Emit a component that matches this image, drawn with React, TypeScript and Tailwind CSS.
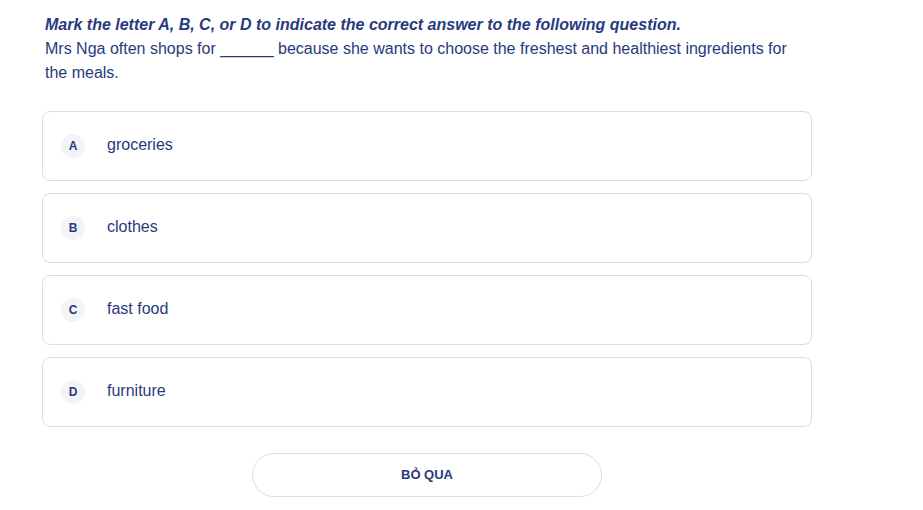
const options = [
  { key: "A", label: "groceries" },
  { key: "B", label: "clothes" },
  { key: "C", label: "fast food" },
  { key: "D", label: "furniture" },
];

export default function App() {
  return (
    <main className="min-h-screen bg-white font-['Liberation_Sans',Arial,sans-serif] text-[#283a7d]">
      <div className="w-[770px] ml-[42px] pt-[13px]">
        {/* câu hỏi */}
        <div className="pl-[3px] text-[16px] leading-[24px]">
          <p className="font-bold italic">
            Mark the letter A, B, C, or D to indicate the correct answer to the following question.
          </p>
          <p>
            Mrs Nga often shops for ______ because she wants to choose the freshest and healthiest
            ingredients for the meals.
          </p>
        </div>

        {/* đáp án */}
        <div className="mt-[26px] flex flex-col gap-[12px]">
          {options.map((o) => (
            <OptionCard key={o.key} letter={o.key} label={o.label} />
          ))}
        </div>

        <div className="mt-[26px] flex justify-center">
          <button className="h-[44px] w-[350px] rounded-full border border-[#d5ddf6] bg-white text-[13px] font-bold text-[#283a7d]">
            BỎ QUA
          </button>
        </div>
      </div>
    </main>
  );
}

const OptionCard = ({ letter, label }: { letter: string; label: string }) => (
  <div className="flex h-[70px] items-center rounded-[8px] border border-[#d5ddf6] bg-white pl-[18px]">
    <span className="flex h-[24px] w-[24px] items-center justify-center rounded-full bg-[#f3f4f6] text-[12px] font-bold">
      {letter}
    </span>
    <span className="ml-[22px] -mt-[3px] text-[16px]">{label}</span>
  </div>
);
